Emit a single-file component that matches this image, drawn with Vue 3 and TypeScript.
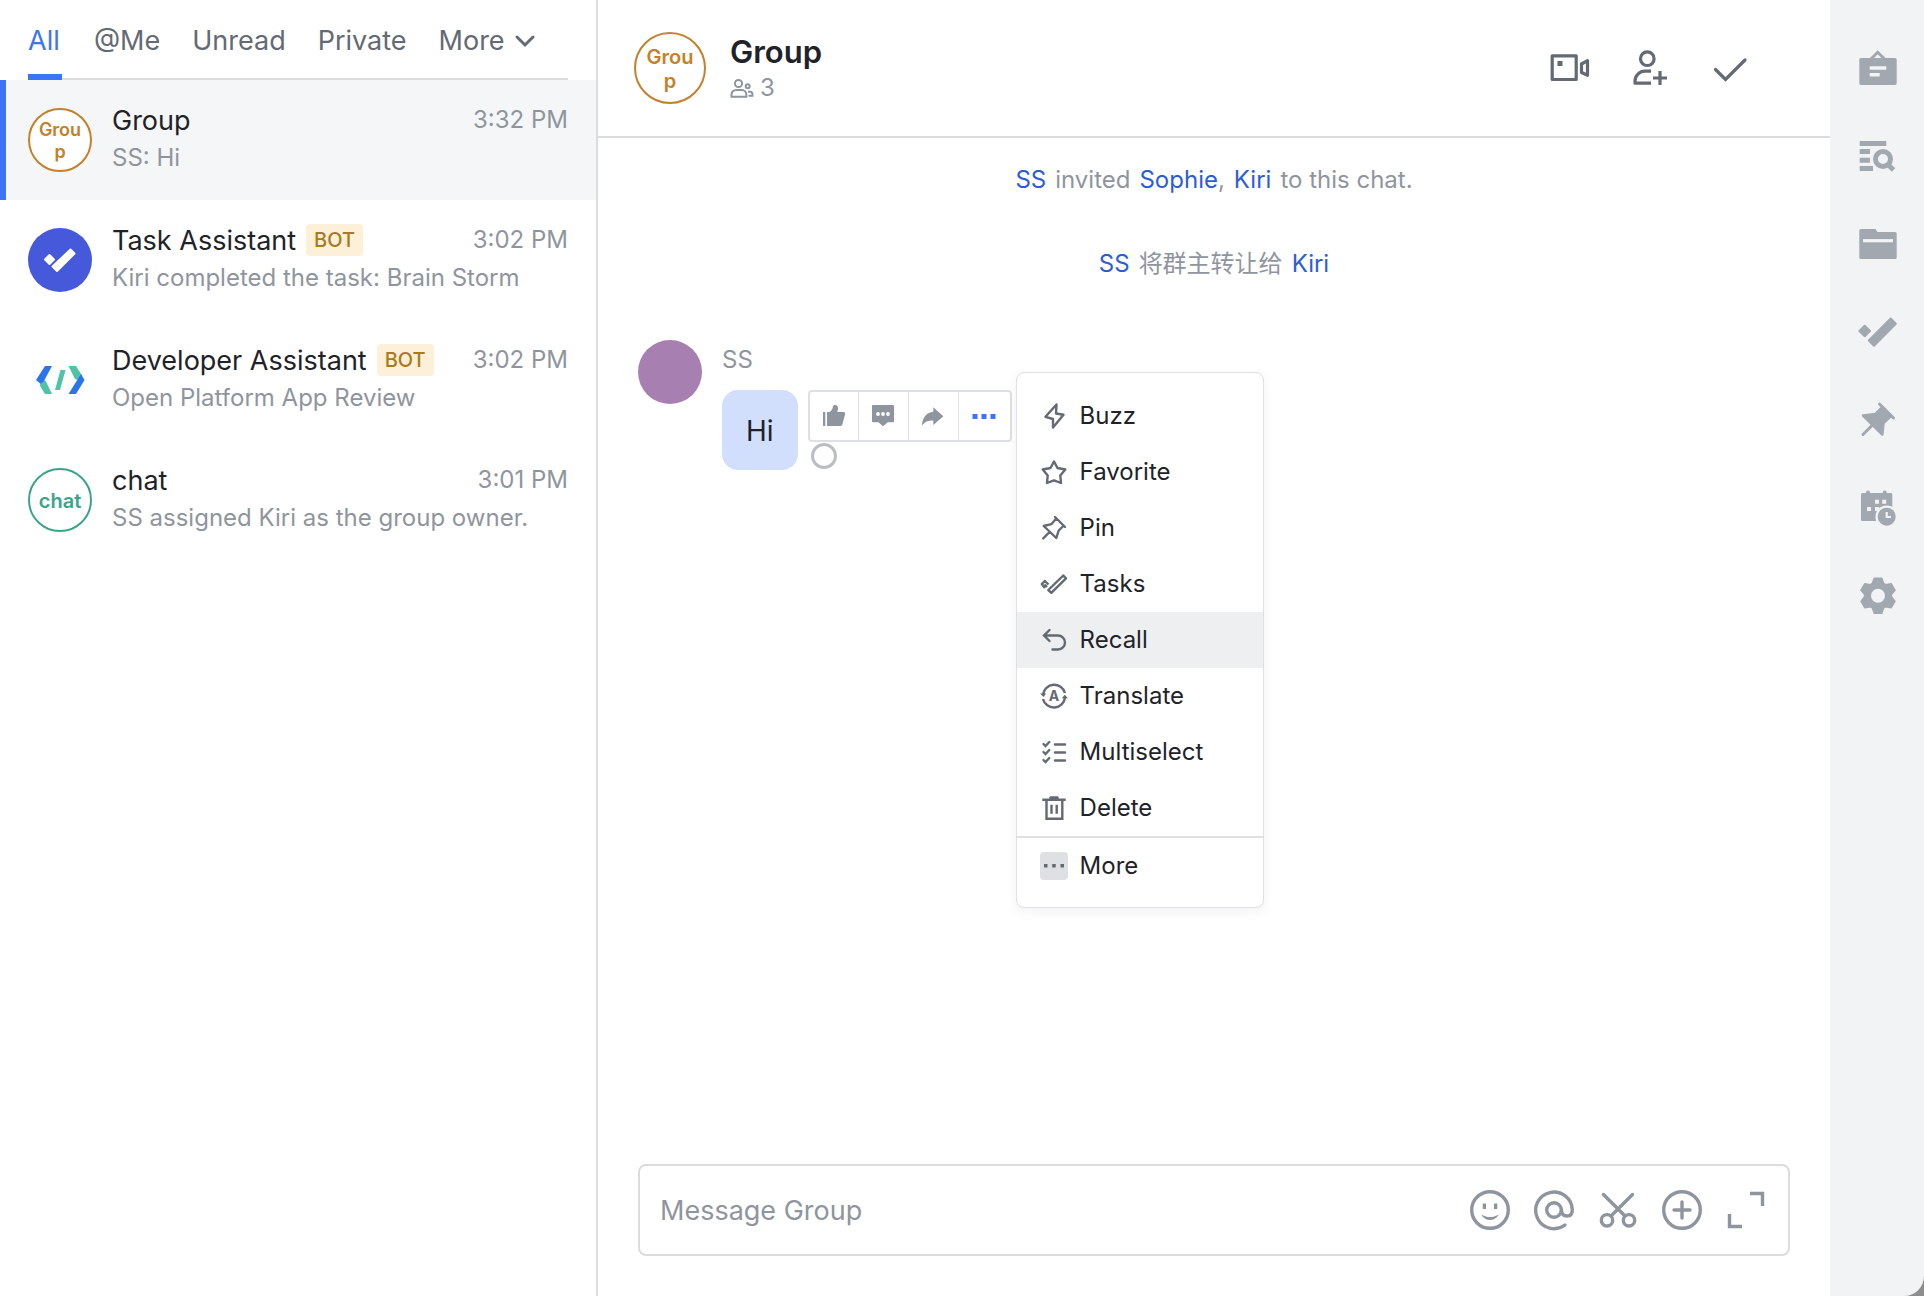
<script setup lang="ts">
import { ref } from 'vue'

interface Conversation {
  name: string
  preview: string
  time: string
  avatar: 'group' | 'task' | 'dev' | 'chat'
  bot?: boolean
}

interface Action {
  label: string
  icon: string
}

const tabs = ['All', '@Me', 'Unread', 'Private']
const activeTab = ref('All')
const activeChat = ref('Group')
const draft = ref('')

const conversations: Conversation[] = [
  { name: 'Group', preview: 'SS: Hi', time: '3:32 PM', avatar: 'group' },
  { name: 'Task Assistant', preview: 'Kiri completed the task: Brain Storm', time: '3:02 PM', avatar: 'task', bot: true },
  { name: 'Developer Assistant', preview: 'Open Platform App Review', time: '3:02 PM', avatar: 'dev', bot: true },
  { name: 'chat', preview: 'SS assigned Kiri as the group owner.', time: '3:01 PM', avatar: 'chat' },
]

// Six-toothed cog outline around the given centre.
function gearPath(cx: number, cy: number): string {
  const points: string[] = []
  for (let tooth = 0; tooth < 6; tooth++) {
    const steps: [number, number][] = [[-25, 13.4], [-12, 17.8], [12, 17.8], [25, 13.4]]
    for (const [offset, radius] of steps) {
      const angle = ((tooth * 60 + offset - 90) * Math.PI) / 180
      points.push(`${(cx + radius * Math.cos(angle)).toFixed(2)} ${(cy + radius * Math.sin(angle)).toFixed(2)}`)
    }
  }
  return `M${points.join('L')}Z`
}

const headerActions: Action[] = [
  { label: 'Video meeting', icon: '<g fill="none" stroke="currentColor" stroke-width="3.2" stroke-linejoin="round"><rect x="2.2" y="7.8" width="24" height="23.7"/><path d="M31.5 16 37.5 12.7V27.3L31.5 24.5Z"/></g><rect x="7.5" y="13" width="5" height="5" fill="currentColor"/>' },
  { label: 'Add members', icon: '<g fill="none" stroke="currentColor" stroke-width="3.2"><circle cx="17.3" cy="10.7" r="6.8"/><path d="M21 23.2H15A10 10 0 0 0 5 33.2V35.2H21" stroke-linejoin="round"/><path d="M30 23V37M23 30H37"/></g>' },
  { label: 'Done', icon: '<path d="M5.5 21.5 15.5 31.5 35 12" fill="none" stroke="currentColor" stroke-width="3.2" stroke-linecap="round"/>' },
]

const sideActions: Action[] = [
  { label: 'Announcement', icon: '<path d="M4 10H38a1.7 1.7 0 0 1 1.7 1.7V35.3a1.7 1.7 0 0 1-1.7 1.7H4a1.7 1.7 0 0 1-1.7-1.7V11.7A1.7 1.7 0 0 1 4 10Z" fill="currentColor"/><path d="M13.5 11.5 20.7 4.3 28 11.5" fill="none" stroke="currentColor" stroke-width="3"/><path d="M12.7 20H29.3M12.7 26.7H22.7" stroke="#f1f3f5" stroke-width="3.4"/>' },
  { label: 'Search history', icon: '<path d="M2.7 5H29.3V10H2.7ZM2.7 13H13V18H2.7ZM2.7 21.7H13V26.7H2.7ZM2.7 30H16V35H2.7Z" fill="currentColor"/><circle cx="26" cy="23" r="7.5" fill="none" stroke="currentColor" stroke-width="5"/><path d="M31 28.5 36.5 34" stroke="currentColor" stroke-width="5"/>' },
  { label: 'Files', icon: '<path d="M3.8 5H18.5L20.5 8H38.2A1.5 1.5 0 0 1 39.7 9.5V33.5A1.5 1.5 0 0 1 38.2 35H3.8A1.5 1.5 0 0 1 2.3 33.5V6.5A1.5 1.5 0 0 1 3.8 5Z" fill="currentColor"/><path d="M6 16.7H36" stroke="#f1f3f5" stroke-width="3.2"/>' },
  { label: 'Tasks', icon: '<g fill="currentColor" stroke="currentColor" stroke-width="2" stroke-linejoin="round"><path d="M7.7 13.7 13 19 7.7 24.3 2.4 19Z"/><path d="M33.7 6.5 38.8 11.8 17 33.8 11.8 28.5Z"/></g>' },
  { label: 'Pins', icon: '<g fill="currentColor" stroke="currentColor" stroke-linecap="round" stroke-linejoin="round"><path d="M6 15.5 18.5 14 25.5 7 34 16 26.5 23 25.3 34.5Z" stroke-width="2.5"/><path d="M22.5 4 36.5 18M15 25.500 6 34.500" stroke-width="3"/></g>' },
  { label: 'Calendar', icon: '<rect x="4" y="5" width="31.3" height="28" rx="1.5" fill="currentColor"/><path d="M11 4.5V8M27.7 4.5V8" stroke="currentColor" stroke-width="4" stroke-linecap="round"/><path d="M18 11.7h4v4h-4ZM25.2 11.7h4v4h-4ZM10 19h4v4h-4ZM18 19h4v4h-4Z" fill="#f1f3f5"/><circle cx="29.7" cy="28.7" r="11.3" fill="#f1f3f5"/><circle cx="29.7" cy="28.7" r="9" fill="currentColor"/><path d="M29.7 24V29H34" fill="none" stroke="#f1f3f5" stroke-width="2.2"/>' },
  { label: 'Settings', icon: `<path d="${gearPath(21, 19.7)}M28 19.7a7 7 0 1 0-14 0a7 7 0 1 0 14 0Z" fill="currentColor" fill-rule="evenodd"/><path d="${gearPath(21, 19.7)}" fill="none" stroke="currentColor" stroke-width="1.6" stroke-linejoin="round"/>` },
]

const messageActions: Action[] = [
  { label: 'Like', icon: '<path d="M3 10H5.3V24H3ZM7 10H9.5C12 8.500 12.5 6.500 13 4.500C13.5 2.500 16 2.500 17.3 4C18.5 5.500 18 8 17.3 10H23.5C25 10 25.3 11.200 25 12.500L22.5 22C22 23.500 21.2 24 20 24H7Z" fill="currentColor"/>' },
  { label: 'Reply', icon: '<path d="M4 3H24a1 1 0 0 1 1 1V19.3a1 1 0 0 1-1 1H18.7L14 24.3 9.5 20.3H4a1 1 0 0 1-1-1V4a1 1 0 0 1 1-1Z" fill="currentColor"/><g fill="#fff"><circle cx="9" cy="12" r="1.9"/><circle cx="14" cy="12" r="1.9"/><circle cx="19" cy="12" r="1.9"/></g>' },
  { label: 'Forward', icon: '<path d="M14.3 5.3 24.3 14.3 14.3 23V18.5C9.5 18.3 6 19.5 3 23.5C3.2 15.5 7.5 10.5 14.3 9.7Z" fill="currentColor"/>' },
  { label: 'More actions', icon: '<path d="M2.5 12h5v5h-5ZM11.5 12h5v5h-5ZM20.5 12h5v5h-5Z" fill="currentColor"/>' },
]

const line = 'fill="none" stroke="currentColor" stroke-width="2.4"'
const menuItems: Action[] = [
  { label: 'Buzz', icon: `<path ${line} stroke-linejoin="round" d="M16.5 2.5 16 11.5 23.5 12.7 13 25.5V17L5.5 14.8Z"/>` },
  { label: 'Favorite', icon: `<path ${line} stroke-linejoin="round" d="M14 3.5 17.5 10 25.3 11.5 20.3 17.5 21 25 14 22.3 7 25 7.7 17.5 2.7 11.5 10.5 10Z"/>` },
  { label: 'Pin', icon: `<path ${line} stroke-linecap="round" stroke-linejoin="round" d="M15 3 25 13M16.3 4.5 11.3 10.2 3.7 12 16.3 24 18.7 16.5 23.3 12M9.5 18 3.3 24.3"/>` },
  { label: 'Tasks', icon: `<path ${line} stroke-linejoin="round" d="M23.3 5.5 26 8.3 11.3 22.8 8.3 20ZM5 18 1.8 14 4.8 11 8.5 14.5M4.500 14.500 7 17"/>` },
  { label: 'Recall', icon: `<path ${line} stroke-linecap="round" d="M9.5 4 4 9.5 9.5 15M4.5 9.5H18A7 7 0 0 1 18 23.5H12.5"/>` },
  { label: 'Translate', icon: `<path ${line} d="M3 12.5A11.2 11.2 0 0 1 24.9 11M25 15.5A11.2 11.2 0 0 1 3 17"/><path d="M0 11.5H6.2L3.5 15ZM21.8 16.2H28L24.7 12.7Z" fill="currentColor"/><text x="14" y="19" text-anchor="middle" font-size="14" font-weight="700" fill="currentColor">A</text>` },
  { label: 'Multiselect', icon: `<path ${line} stroke-linecap="round" d="M3.5 6 5.5 8 9.3 4M3.5 14 5.5 16 9.3 12M3.5 22 5.5 24 9.3 20M15 6.5H25M15 14.5H25M15 22.5H25"/>` },
  { label: 'Delete', icon: `<path ${line} d="M2.3 5.7H25.7M6.5 6V24.7H22.3V6M11.5 10.7V19.7M16.700 10.700V19.700"/><path d="M9.3 5V3.2L10.3 2.2H17.7L18.7 3.2V5Z" fill="currentColor"/>` },
  { label: 'More', icon: '<rect width="28" height="28" rx="4" fill="#dee0e3"/><path d="M4 12h3.5v3.5H4ZM12.2 12h3.5v3.5h-3.5ZM20.5 12h3.5v3.5h-3.5Z" fill="currentColor"/>' },
]
const activeItem = ref('Recall')

const composerActions: Action[] = [
  { label: 'Emoji', icon: '<circle cx="20" cy="20" r="18.3" fill="none" stroke="currentColor" stroke-width="3.4"/><path d="M12.7 13.5H16V19H12.7ZM24 13.5H27.3V19H24ZM11.3 24.5C14.5 31.8 25.5 31.8 28.7 24.5C25 26.7 23 27 20 27C17 27 15 26.7 11.3 24.5Z" fill="currentColor"/>' },
  { label: 'Mention', icon: '<g fill="none" stroke="currentColor" stroke-width="3.4" stroke-linecap="round"><circle cx="20" cy="20" r="7.3"/><path d="M31 35A18.3 18.3 0 1 1 38.3 20C38.3 24 36.5 26 33.2 26C29.5 26 27.5 24 27.5 20"/></g>' },
  { label: 'Screenshot', icon: '<g fill="none" stroke="currentColor" stroke-width="3.4" stroke-linecap="round"><circle cx="9" cy="30.3" r="5.7"/><circle cx="31" cy="30.3" r="5.7"/><path d="M5.5 4.5 27 26M34.5 4.5 13 26"/></g>' },
  { label: 'Attach', icon: '<g fill="none" stroke="currentColor" stroke-width="3.4"><circle cx="20" cy="20" r="18.3"/><path d="M20 12V28M12 20H28" stroke-linecap="round"/></g>' },
  { label: 'Expand', icon: '<path d="M24 3.5H36.5V16M3.5 24V36.5H16" fill="none" stroke="currentColor" stroke-width="3.400"/>' },
]
</script>

<template>
  <div class="app">
    <aside class="inbox">
      <nav class="tabs" aria-label="Filters">
        <button
          v-for="tab in tabs"
          :key="tab"
          type="button"
          class="tab"
          :class="{ active: tab === activeTab }"
          @click="activeTab = tab"
        >{{ tab }}</button>
        <button type="button" class="tab">
          More
          <svg class="chevron" viewBox="0 0 20 20" aria-hidden="true"><path d="M2 6 10 14 18 6" fill="none" stroke="currentColor" stroke-width="3" stroke-linecap="round" /></svg>
        </button>
      </nav>

      <button
        v-for="chat in conversations"
        :key="chat.name"
        type="button"
        class="chat"
        :class="{ selected: chat.name === activeChat }"
        @click="activeChat = chat.name"
      >
        <span v-if="chat.avatar === 'group'" class="avatar orange">Grou<br>p</span>
        <span v-else-if="chat.avatar === 'chat'" class="avatar teal">chat</span>
        <svg v-else-if="chat.avatar === 'task'" class="picture" viewBox="0 0 64 64" aria-hidden="true">
          <circle cx="32" cy="32" r="32" fill="#4759db" />
          <g fill="#fff" stroke="#fff" stroke-width="2" stroke-linejoin="round">
            <path d="M21.5 27 26 31.5 21.5 36 17 31.5Z" />
            <path d="M42.5 21.5 46.5 25.5 29 43 24.5 38.5Z" />
          </g>
        </svg>
        <svg v-else class="picture" viewBox="0 0 64 64" aria-hidden="true">
          <path d="M17 18H24L17.5 30 14.5 37.5 8 32Z" fill="#2a74ee" />
          <path d="M14 34.5 17.5 32.5 24 46H17L11.5 37Z" fill="#4fc2a7" />
          <path d="M32.5 22H37.5L32 42H27Z" fill="#4fc2a7" />
          <path d="M40.5 18H48L54 27.5 50 32 47 31Z" fill="#4fc2a7" />
          <path d="M53 26 56.5 32 48 46H40.5Z" fill="#2a74ee" />
        </svg>
        <span class="summary">
          <span class="top-line">
            <span class="name">{{ chat.name }}</span>
            <span v-if="chat.bot" class="badge">BOT</span>
            <span class="time">{{ chat.time }}</span>
          </span>
          <span class="preview">{{ chat.preview }}</span>
        </span>
      </button>
    </aside>

    <main class="room">
      <header class="room-header">
        <span class="avatar orange large">Grou<br>p</span>
        <div class="room-info">
          <h1>Group</h1>
          <p class="members">
            <svg viewBox="0 0 24 24" aria-hidden="true">
              <g fill="none" stroke="currentColor" stroke-width="2">
                <circle cx="8.5" cy="7.5" r="3.6" />
                <path d="M1.5 20.7V18.5A4.5 4.5 0 0 1 6 14H12A4.5 4.5 0 0 1 16.3 18.5V20.7Z" />
                <circle cx="17.7" cy="10.2" r="2" />
                <path d="M18 15.7H20A2.5 2.5 0 0 1 22.5 18.2V19.7H18.5" />
              </g>
            </svg>
            3
          </p>
        </div>
        <div class="room-tools">
          <button v-for="action in headerActions" :key="action.label" type="button" :aria-label="action.label">
            <svg class="icon" viewBox="0 0 40 40" v-html="action.icon"></svg>
          </button>
        </div>
      </header>

      <section class="stream">
        <p class="notice"><a href="#">SS</a><span>invited</span><span><a href="#">Sophie</a>,</span><a href="#">Kiri</a><span>to this chat.</span></p>
        <p class="notice"><a href="#">SS</a><span>将群主转让给</span><a href="#">Kiri</a></p>

        <article class="message">
          <span class="sender-avatar"></span>
          <div class="message-body">
            <span class="sender">SS</span>
            <div class="bubble-row">
              <p class="bubble">Hi</p>
              <div class="side">
                <div class="toolbar">
                  <button v-for="action in messageActions" :key="action.label" type="button" :aria-label="action.label">
                    <svg viewBox="0 0 28 28" v-html="action.icon"></svg>
                  </button>
                </div>
                <span class="receipt"></span>
                <ul class="menu">
                  <li v-for="item in menuItems" :key="item.label">
                    <button type="button" :class="{ hovered: item.label === activeItem }" @mouseenter="activeItem = item.label">
                      <svg viewBox="0 0 28 28" aria-hidden="true" v-html="item.icon"></svg>
                      {{ item.label }}
                    </button>
                  </li>
                </ul>
              </div>
            </div>
          </div>
        </article>
      </section>

      <form class="composer" @submit.prevent>
        <input v-model="draft" type="text" placeholder="Message Group" aria-label="Message Group">
        <button v-for="action in composerActions" :key="action.label" type="button" :aria-label="action.label">
          <svg class="icon" viewBox="0 0 40 40" v-html="action.icon"></svg>
        </button>
      </form>
    </main>

    <div class="rail-frame">
      <nav class="rail" aria-label="Group tools">
        <button v-for="action in sideActions" :key="action.label" type="button" :aria-label="action.label">
          <svg class="icon" viewBox="0 0 40 40" v-html="action.icon"></svg>
        </button>
      </nav>
    </div>
  </div>
</template>

<style>
body {
  margin: 0;
}
</style>

<style scoped>
.app {
  display: flex;
  min-height: 100vh;
  background: #fff;
  color: #1f2329;
  font-family: Inter, "Noto Sans CJK SC", sans-serif;
  font-size: 24px;
  line-height: 32px;
}

.app * {
  box-sizing: border-box;
}

button {
  margin: 0;
  padding: 0;
  border: 0;
  background: none;
  color: inherit;
  font: inherit;
  text-align: left;
  cursor: pointer;
}

p,
h1,
ul {
  margin: 0;
  padding: 0;
}

svg {
  display: block;
  flex: none;
  overflow: visible;
}

.icon {
  width: 40px;
  height: 40px;
}

a {
  color: #2b5dd9;
  text-decoration: none;
}

/* Conversation list */
.inbox {
  flex: 0 0 598px;
  min-width: 0;
  border-right: 2px solid #dcdcdd;
}

.tabs {
  display: flex;
  gap: 32px;
  height: 80px;
  margin: 0 28px;
  border-bottom: 2px solid #dcdcdd;
}

.tab {
  display: flex;
  align-items: center;
  gap: 10px;
  min-width: 34px;
  height: 80px;
  border-bottom: 6px solid transparent;
  padding-top: 8px;
  color: #646a73;
  font-size: 27px;
}

.tab.active {
  border-bottom-color: #3d74f6;
  color: #3d74f6;
}

.chevron {
  width: 20px;
  height: 20px;
}

.chat {
  display: flex;
  gap: 20px;
  width: 100%;
  height: 120px;
  padding: 22px 28px 0 22px;
  border-left: 6px solid transparent;
}

.chat.selected {
  border-left-color: #3d74f6;
  background: #f5f6f7;
}

.avatar {
  display: flex;
  flex: none;
  align-items: center;
  justify-content: center;
  width: 64px;
  height: 64px;
  padding-top: 2px;
  border: 2px solid;
  border-radius: 50%;
  background: #fff;
  font-size: 18px;
  font-weight: 600;
  line-height: 22px;
  text-align: center;
}

.chat .avatar,
.picture {
  margin-top: 6px;
}

.picture {
  width: 64px;
  height: 64px;
}

.orange {
  color: #c4802a;
}

.teal {
  color: #3ba58b;
  font-size: 20px;
}

.large {
  width: 72px;
  height: 72px;
  font-size: 20px;
  line-height: 24px;
}

.summary {
  flex: 1;
  min-width: 0;
}

.top-line {
  display: flex;
  align-items: center;
  gap: 10px;
  height: 36px;
}

.name {
  padding-top: 2px;
  font-size: 27px;
}

.badge {
  padding: 0 8px;
  border-radius: 4px;
  background: #fdf0d9;
  color: #a97a1e;
  font-size: 20px;
  font-weight: 500;
}

.time {
  margin-left: auto;
  color: #8f959e;
}

.preview {
  display: block;
  margin-top: 4px;
  overflow: hidden;
  color: #8f959e;
  text-overflow: ellipsis;
  white-space: nowrap;
}

/* Chat room */
.room {
  display: flex;
  flex: 1;
  flex-direction: column;
  min-width: 0;
}

.room-header {
  display: flex;
  align-items: center;
  gap: 24px;
  height: 138px;
  padding: 0 80px 0 36px;
  border-bottom: 2px solid #dcdcdd;
}

h1 {
  font-size: 31px;
  font-weight: 600;
  line-height: 40px;
}

.members {
  display: flex;
  align-items: center;
  gap: 6px;
  color: #8f959e;
}

.members svg {
  width: 24px;
  height: 24px;
}

.room-tools {
  display: flex;
  gap: 40px;
  margin-left: auto;
  color: #646a73;
}

.stream {
  flex: 1;
  padding: 26px 40px 0;
}

.notice {
  display: flex;
  justify-content: center;
  gap: 9px;
  margin-bottom: 52px;
  color: #8f959e;
}

.message {
  display: flex;
  gap: 20px;
  margin-top: 60px;
}

.sender-avatar {
  width: 64px;
  height: 64px;
  border-radius: 50%;
  background: #a77fb1;
}

.sender {
  display: block;
  margin: 4px 0 14px;
  color: #8f959e;
}

.bubble-row {
  display: flex;
  gap: 10px;
}

.bubble {
  height: 80px;
  padding: 25px 24px 23px;
  border-radius: 16px;
  background: #d1dffd;
  font-size: 28px;
}

.side {
  position: relative;
}

.toolbar {
  display: flex;
  border: 2px solid #dee0e3;
  border-radius: 4px;
}

.toolbar button {
  display: flex;
  align-items: center;
  justify-content: center;
  width: 50px;
  height: 48px;
  border-right: 1px solid #dee0e3;
  color: #8f959e;
}

.toolbar button:first-child {
  width: 49px;
}

.toolbar button:last-child {
  width: 51px;
  border-right: 0;
  color: #3d74f6;
}

.toolbar svg,
.menu svg {
  width: 28px;
  height: 28px;
}

.receipt {
  display: block;
  width: 26px;
  height: 26px;
  margin: 1px 3px;
  border: 3px solid #bbbfc4;
  border-radius: 50%;
}

.menu {
  position: absolute;
  top: -18px;
  left: calc(100% + 4px);
  width: 248px;
  padding: 15px 0 13px;
  border: 1px solid #dee0e3;
  border-radius: 8px;
  background: #fff;
  box-shadow: 0 4px 12px rgba(31, 35, 41, 0.06);
  list-style: none;
}

.menu button {
  display: flex;
  align-items: center;
  gap: 12px;
  width: 100%;
  height: 56px;
  padding: 0 23px;
}

.menu svg {
  color: #646a73;
}

.menu .hovered {
  background: #eeeff1;
}

.menu li:last-child {
  border-top: 2px solid #dee0e3;
}

.composer {
  display: flex;
  align-items: center;
  gap: 24px;
  height: 92px;
  margin: 0 40px 40px;
  padding: 0 22px 0 20px;
  border: 2px solid #dcdcdd;
  border-radius: 8px;
  color: #8f959e;
}

.composer input {
  flex: 1;
  min-width: 0;
  padding: 2px 0 0;
  border: 0;
  outline: 0;
  background: none;
  color: #1f2329;
  font: inherit;
  font-size: 27px;
}

.composer input::placeholder {
  color: #8f959e;
  opacity: 1;
}

/* Tool rail */
.rail-frame {
  display: flex;
  flex: 0 0 94px;
  background: #8e8e8e;
}

.rail {
  display: flex;
  flex: 1;
  flex-direction: column;
  align-items: center;
  gap: 48px;
  padding-top: 48px;
  border-bottom-right-radius: 20px;
  background: #f1f3f5;
  color: #a2a8b0;
}
</style>
